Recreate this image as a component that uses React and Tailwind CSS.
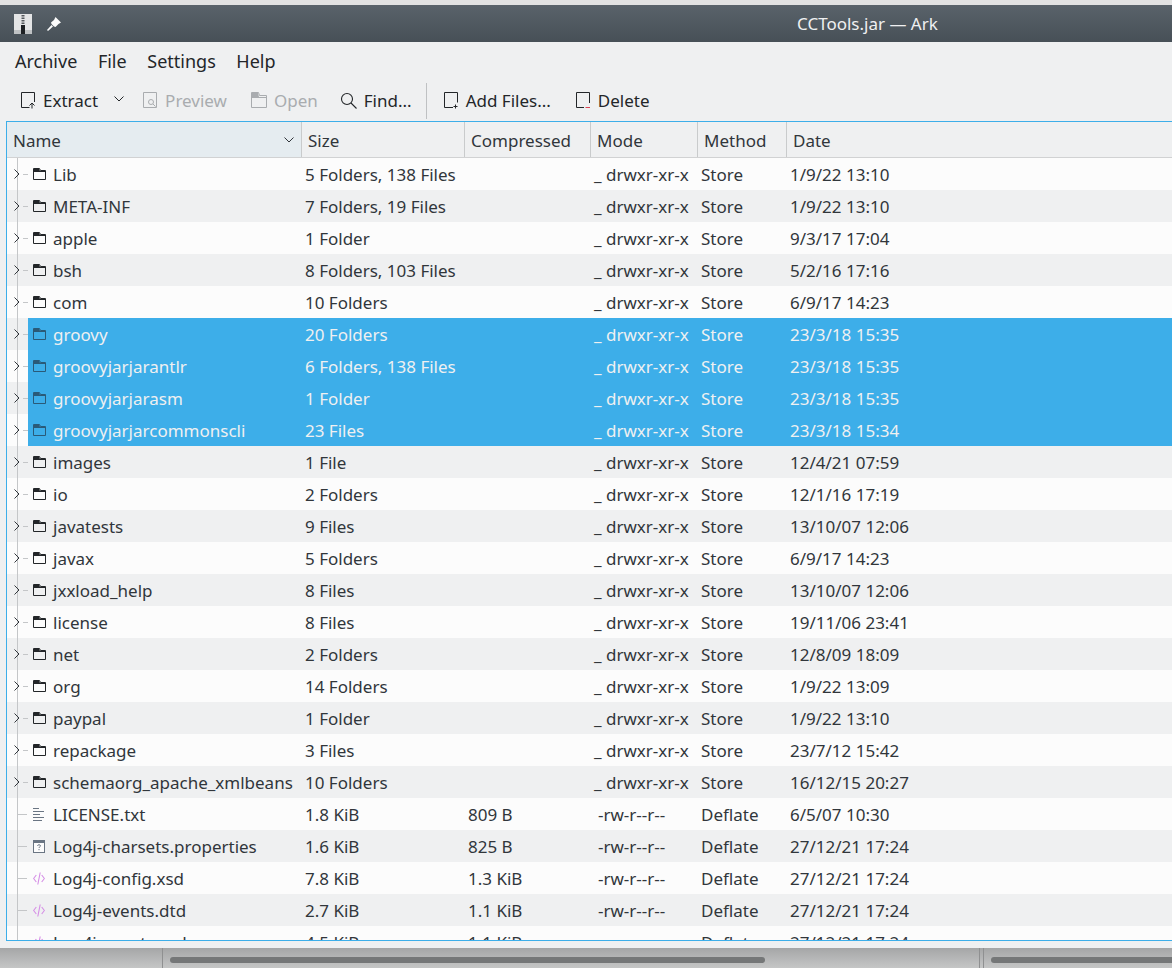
const folders = [
  ["Lib", "5 Folders, 138 Files", "1/9/22 13:10"],
  ["META-INF", "7 Folders, 19 Files", "1/9/22 13:10"],
  ["apple", "1 Folder", "9/3/17 17:04"],
  ["bsh", "8 Folders, 103 Files", "5/2/16 17:16"],
  ["com", "10 Folders", "6/9/17 14:23"],
  ["groovy", "20 Folders", "23/3/18 15:35", 1],
  ["groovyjarjarantlr", "6 Folders, 138 Files", "23/3/18 15:35", 1],
  ["groovyjarjarasm", "1 Folder", "23/3/18 15:35", 1],
  ["groovyjarjarcommonscli", "23 Files", "23/3/18 15:34", 1],
  ["images", "1 File", "12/4/21 07:59"],
  ["io", "2 Folders", "12/1/16 17:19"],
  ["javatests", "9 Files", "13/10/07 12:06"],
  ["javax", "5 Folders", "6/9/17 14:23"],
  ["jxxload_help", "8 Files", "13/10/07 12:06"],
  ["license", "8 Files", "19/11/06 23:41"],
  ["net", "2 Folders", "12/8/09 18:09"],
  ["org", "14 Folders", "1/9/22 13:09"],
  ["paypal", "1 Folder", "1/9/22 13:10"],
  ["repackage", "3 Files", "23/7/12 15:42"],
  ["schemaorg_apache_xmlbeans", "10 Folders", "16/12/15 20:27"],
];
const files = [
  ["LICENSE.txt", "1.8 KiB", "809 B", "-rw-r--r--", "6/5/07 10:30", "txt"],
  ["Log4j-charsets.properties", "1.6 KiB", "825 B", "-rw-r--r--", "27/12/21 17:24", "prop"],
  ["Log4j-config.xsd", "7.8 KiB", "1.3 KiB", "-rw-r--r--", "27/12/21 17:24", "xml"],
  ["Log4j-events.dtd", "2.7 KiB", "1.1 KiB", "-rw-r--r--", "27/12/21 17:24", "xml"],
  ["Log4j-events.xsd", "4.5 KiB", "1.1 KiB", "-rw-r--r--", "27/12/21 17:24", "xml"],
];

function FolderIcon({ color }) {
  return (
    <svg width="13" height="12" viewBox="0 0 13 12" fill="none" stroke={color}>
      <path d="M0.5 11.5V0.5H6.5L7.5 2.5H12.5V11.5Z" />
      <path d="M0.5 3.5H12.5" />
      <path d="M1 1H6.2L7 3H1Z" fill={color} stroke="none" />
    </svg>
  );
}
function TxtIcon() {
  return (
    <svg width="12" height="13" viewBox="0 0 12 13" fill="none" stroke="#6a7583">
      <path d="M0 0.5H6M0 3.5H11M0 6.5H7M0 9.5H11M0 12.5H9" />
    </svg>
  );
}
function PropIcon() {
  return (
    <svg width="12" height="13" viewBox="0 0 12 13" fill="none">
      <rect x="0.5" y="0.5" width="11" height="12" fill="#fcfcfc" stroke="#6a7583" />
      <rect x="0" y="0" width="12" height="3" fill="#6a7583" />
      <path d="M4.5 5.8C4.5 4.4 7.5 4.4 7.5 5.8C7.5 6.9 6 6.8 6 8M6 9V10.2" stroke="#6a7583" />
    </svg>
  );
}
function XmlIcon() {
  return (
    <svg width="12" height="13" viewBox="0 0 12 13" fill="none" stroke="#d58ee6" strokeWidth="1.1">
      <path d="M3.3 3L0.6 6.5L3.3 10M8.7 3L11.4 6.5L8.7 10M7.2 0.5L4.8 12.5" />
    </svg>
  );
}
function ExpandArrow() {
  return (
    <svg width="6" height="10" viewBox="0 0 6 10" fill="none" stroke="#31363b" className="absolute left-[7px] top-[11px]">
      <path d="M0.5 0.5L5 5L0.5 9.5" />
    </svg>
  );
}
function TreeLines({ folder }) {
  return (
    <>
      <span className="absolute left-[10px] top-0 h-8 w-px bg-[#c4c6c8]" />
      <span className={`absolute top-4 h-px bg-[#c4c6c8] ${folder ? "left-[16px] w-[5px]" : "left-[11px] w-[9px]"}`} />
    </>
  );
}
function ToolIcon({ kind, muted }) {
  const c = muted ? "#a9acaf" : "#232629";
  if (kind === "find")
    return (
      <svg width="18" height="18" viewBox="0 0 18 18" fill="none" stroke={c} strokeWidth="1.1">
        <circle cx="7" cy="7" r="5.5" />
        <path d="M11 11L16.5 16.5" />
      </svg>
    );
  if (kind === "open")
    return (
      <svg width="17" height="17" viewBox="0 0 17 17" fill="none" stroke={c}>
        <path d="M0.5 15.5V0.5H7.5L8.5 3.5H15.5V15.5Z" />
        <path d="M1 1H7L8 5H1Z" fill={c} stroke="none" />
        <path d="M0.5 5.5H15.5" />
      </svg>
    );
  return (
    <svg width="16" height="17" viewBox="0 0 16 17" fill="none" stroke={c}>
      {kind === "extract" && <path d="M8.5 15.5H0.5V0.5H13.5V10M11 16.5V11M8.5 13.5L11 11L13.5 13.5" />}
      {kind === "preview" && (
        <>
          <path d="M0.5 15.5V0.5H13.5V15.5Z" />
          <circle cx="8" cy="10" r="2.5" />
          <path d="M10 12L12.5 14.5" />
        </>
      )}
      {kind === "add" && <path d="M9 15.5H0.5V0.5H13.5V10.5M11.5 12.5V16.5M9.5 14.5H13.5" />}
      {kind === "delete" && (
        <>
          <path d="M8 15.5H0.5V0.5H13.5V11" />
          <path d="M9.5 15.5H14" stroke="#da4453" />
        </>
      )}
    </svg>
  );
}
function Tool({ kind, label, muted, className }) {
  return (
    <div className={`flex items-center gap-[6px] ${muted ? "text-[#a9acaf]" : "text-[#232629]"} ${className}`}>
      <ToolIcon kind={kind} muted={muted} />
      <span>{label}</span>
    </div>
  );
}
const cols = "grid grid-cols-[295px_163px_126px_107px_89px_1fr]";

function Row({ i, name, size, comp, mode, method, date, sel, icon, folder }) {
  const alt = i % 2 === 1;
  const textc = sel ? "text-[#eff0f1]" : "text-[#31363b]";
  const cell = `flex h-8 items-center pt-[2px] ${sel ? "bg-[#3daee9]" : ""}`;
  return (
    <div className={`relative ${cols} h-8 shrink-0 items-center ${textc} ${alt ? "bg-[#eff0f1]" : "bg-[#fcfcfc]"}`}>
      <TreeLines folder={folder} />
      {folder && <ExpandArrow />}
      <div className={`ml-[21px] pl-[5px] ${cell}`}>
        <span className="mb-[2px] flex w-[20px] shrink-0 items-center">
          {icon === "txt" ? <TxtIcon /> : icon === "prop" ? <PropIcon /> : icon === "xml" ? <XmlIcon /> : <FolderIcon color={sel ? "#2a5a78" : "#232629"} />}
        </span>
        <span className="whitespace-nowrap">{name}</span>
      </div>
      <div className={`pl-[3px] ${cell}`}>{size}</div>
      <div className={`pl-[3px] ${cell}`}>{comp}</div>
      <div className={`whitespace-nowrap ${folder ? "pl-[3px]" : "pl-[7px]"} ${cell}`}>{mode}</div>
      <div className={`pl-[3px] ${cell}`}>{method}</div>
      <div className={`pl-[3px] ${cell}`}>{date}</div>
    </div>
  );
}

export default function App() {
  return (
    <div className="flex h-[968px] w-[1172px] flex-col overflow-hidden bg-[#eff0f1] text-[17px] text-[#31363b] [font-family:'Noto_Sans',sans-serif]">
      <div className="h-[5px] shrink-0 bg-[#e2e2e2]" />
      <div className="flex h-[37px] shrink-0 items-center bg-gradient-to-b from-[#59626a] to-[#475057] pl-[14px] text-[#eff0f1]">
        <svg width="18" height="20" viewBox="0 0 18 20" className="shrink-0">
          <rect width="18" height="20" fill="#e4e5e6" />
          <rect y="16" width="18" height="4" fill="#bfc2c4" />
          <rect x="7" y="11" width="4" height="9" fill="#1d2023" />
          <path d="M9 1V11" stroke="#55595d" strokeWidth="3" strokeDasharray="1.5 1" />
        </svg>
        <svg width="16" height="16" viewBox="0 0 16 16" className="ml-[14px] shrink-0" fill="#fcfcfc">
          <path d="M9.5 1L15 6.5L12.5 8L9.5 11L8 10.5L5.5 8L5 6.5L8 4Z" />
          <path d="M5.5 9L7 10.5L2 15L1 14Z" />
        </svg>
        <div className="ml-[735px] whitespace-nowrap">CCTools.jar — Ark</div>
      </div>
      <div className="flex h-[40px] shrink-0 items-center gap-[20.6px] pb-[2px] pl-[15px] text-[18px] text-[#232629]">
        <span>Archive</span>
        <span>File</span>
        <span>Settings</span>
        <span>Help</span>
      </div>
      <div className="flex h-[39px] shrink-0 items-center pb-[2px] pl-[21px]">
        <Tool kind="extract" label="Extract" />
        <svg width="12" height="8" viewBox="0 0 12 8" fill="none" stroke="#232629" className="mb-1 ml-[15px]">
          <path d="M1.5 1.5L6 6L10.5 1.5" />
        </svg>
        <Tool kind="preview" label="Preview" muted className="ml-[18px]" />
        <Tool kind="open" label="Open" muted className="ml-[24px]" />
        <Tool kind="find" label="Find..." className="ml-[22px]" />
        <div className="ml-[14px] h-[36px] w-px bg-[#bfc1c3]" />
        <Tool kind="add" label="Add Files..." className="ml-[17px]" />
        <Tool kind="delete" label="Delete" className="ml-[25px]" />
      </div>
      <div className="ml-[6px] flex h-[820px] shrink-0 flex-col overflow-hidden border border-r-0 border-[#3daee9]">
        <div className={`${cols} h-[36px] shrink-0 items-center border-b border-[#d1d2d3] bg-[#eff0f1] text-[#31363b]`}>
          <div className="flex h-full items-center justify-between border-r border-[#c9cbcc] bg-[#e5ecf0] px-[6px]">
            <span className="pt-[3px]">Name</span>
            <svg width="12" height="8" viewBox="0 0 12 8" fill="none" stroke="#31363b">
              <path d="M1.5 1.5L6 6L10.5 1.5" />
            </svg>
          </div>
          <div className="flex h-full items-center border-r border-[#c9cbcc] pl-[6px] pt-[3px]">Size</div>
          <div className="flex h-full items-center border-r border-[#c9cbcc] pl-[6px] pt-[3px]">Compressed</div>
          <div className="flex h-full items-center border-r border-[#c9cbcc] pl-[6px] pt-[3px]">Mode</div>
          <div className="flex h-full items-center border-r border-[#c9cbcc] pl-[6px] pt-[3px]">Method</div>
          <div className="flex h-full items-center pl-[6px] pt-[3px]">Date</div>
        </div>
        {folders.map((f, i) => (
          <Row key={f[0]} i={i} name={f[0]} size={f[1]} comp="" mode="_ drwxr-xr-x" method="Store" date={f[2]} sel={f[3]} folder />
        ))}
        {files.map((f, i) => (
          <Row key={f[0]} i={i + 20} name={f[0]} size={f[1]} comp={f[2]} mode={f[3]} method="Deflate" date={f[4]} icon={f[5]} />
        ))}
      </div>
      <div className="h-[7px] shrink-0 bg-[#eff0f1]" />
      <div className="flex h-[20px] shrink-0 bg-gradient-to-b from-[#a5a6a7] to-[#c5c6c6]">
        <div className="w-[163px] shrink-0 border-r border-[#8f9091]" />
        <div className="flex-1">
          <div className="ml-[7px] mt-[9px] h-[6px] w-[595px] rounded-full bg-[#757778]" />
        </div>
        <div className="flex w-[193px] shrink-0 border-l border-[#8f9091]">
          <div className="w-[4px] shrink-0 border-r border-[#8f9091]" />
          <div className="ml-[7px] mt-[9px] h-[6px] flex-1 rounded-l-full bg-[#757778]" />
        </div>
      </div>
    </div>
  );
}
